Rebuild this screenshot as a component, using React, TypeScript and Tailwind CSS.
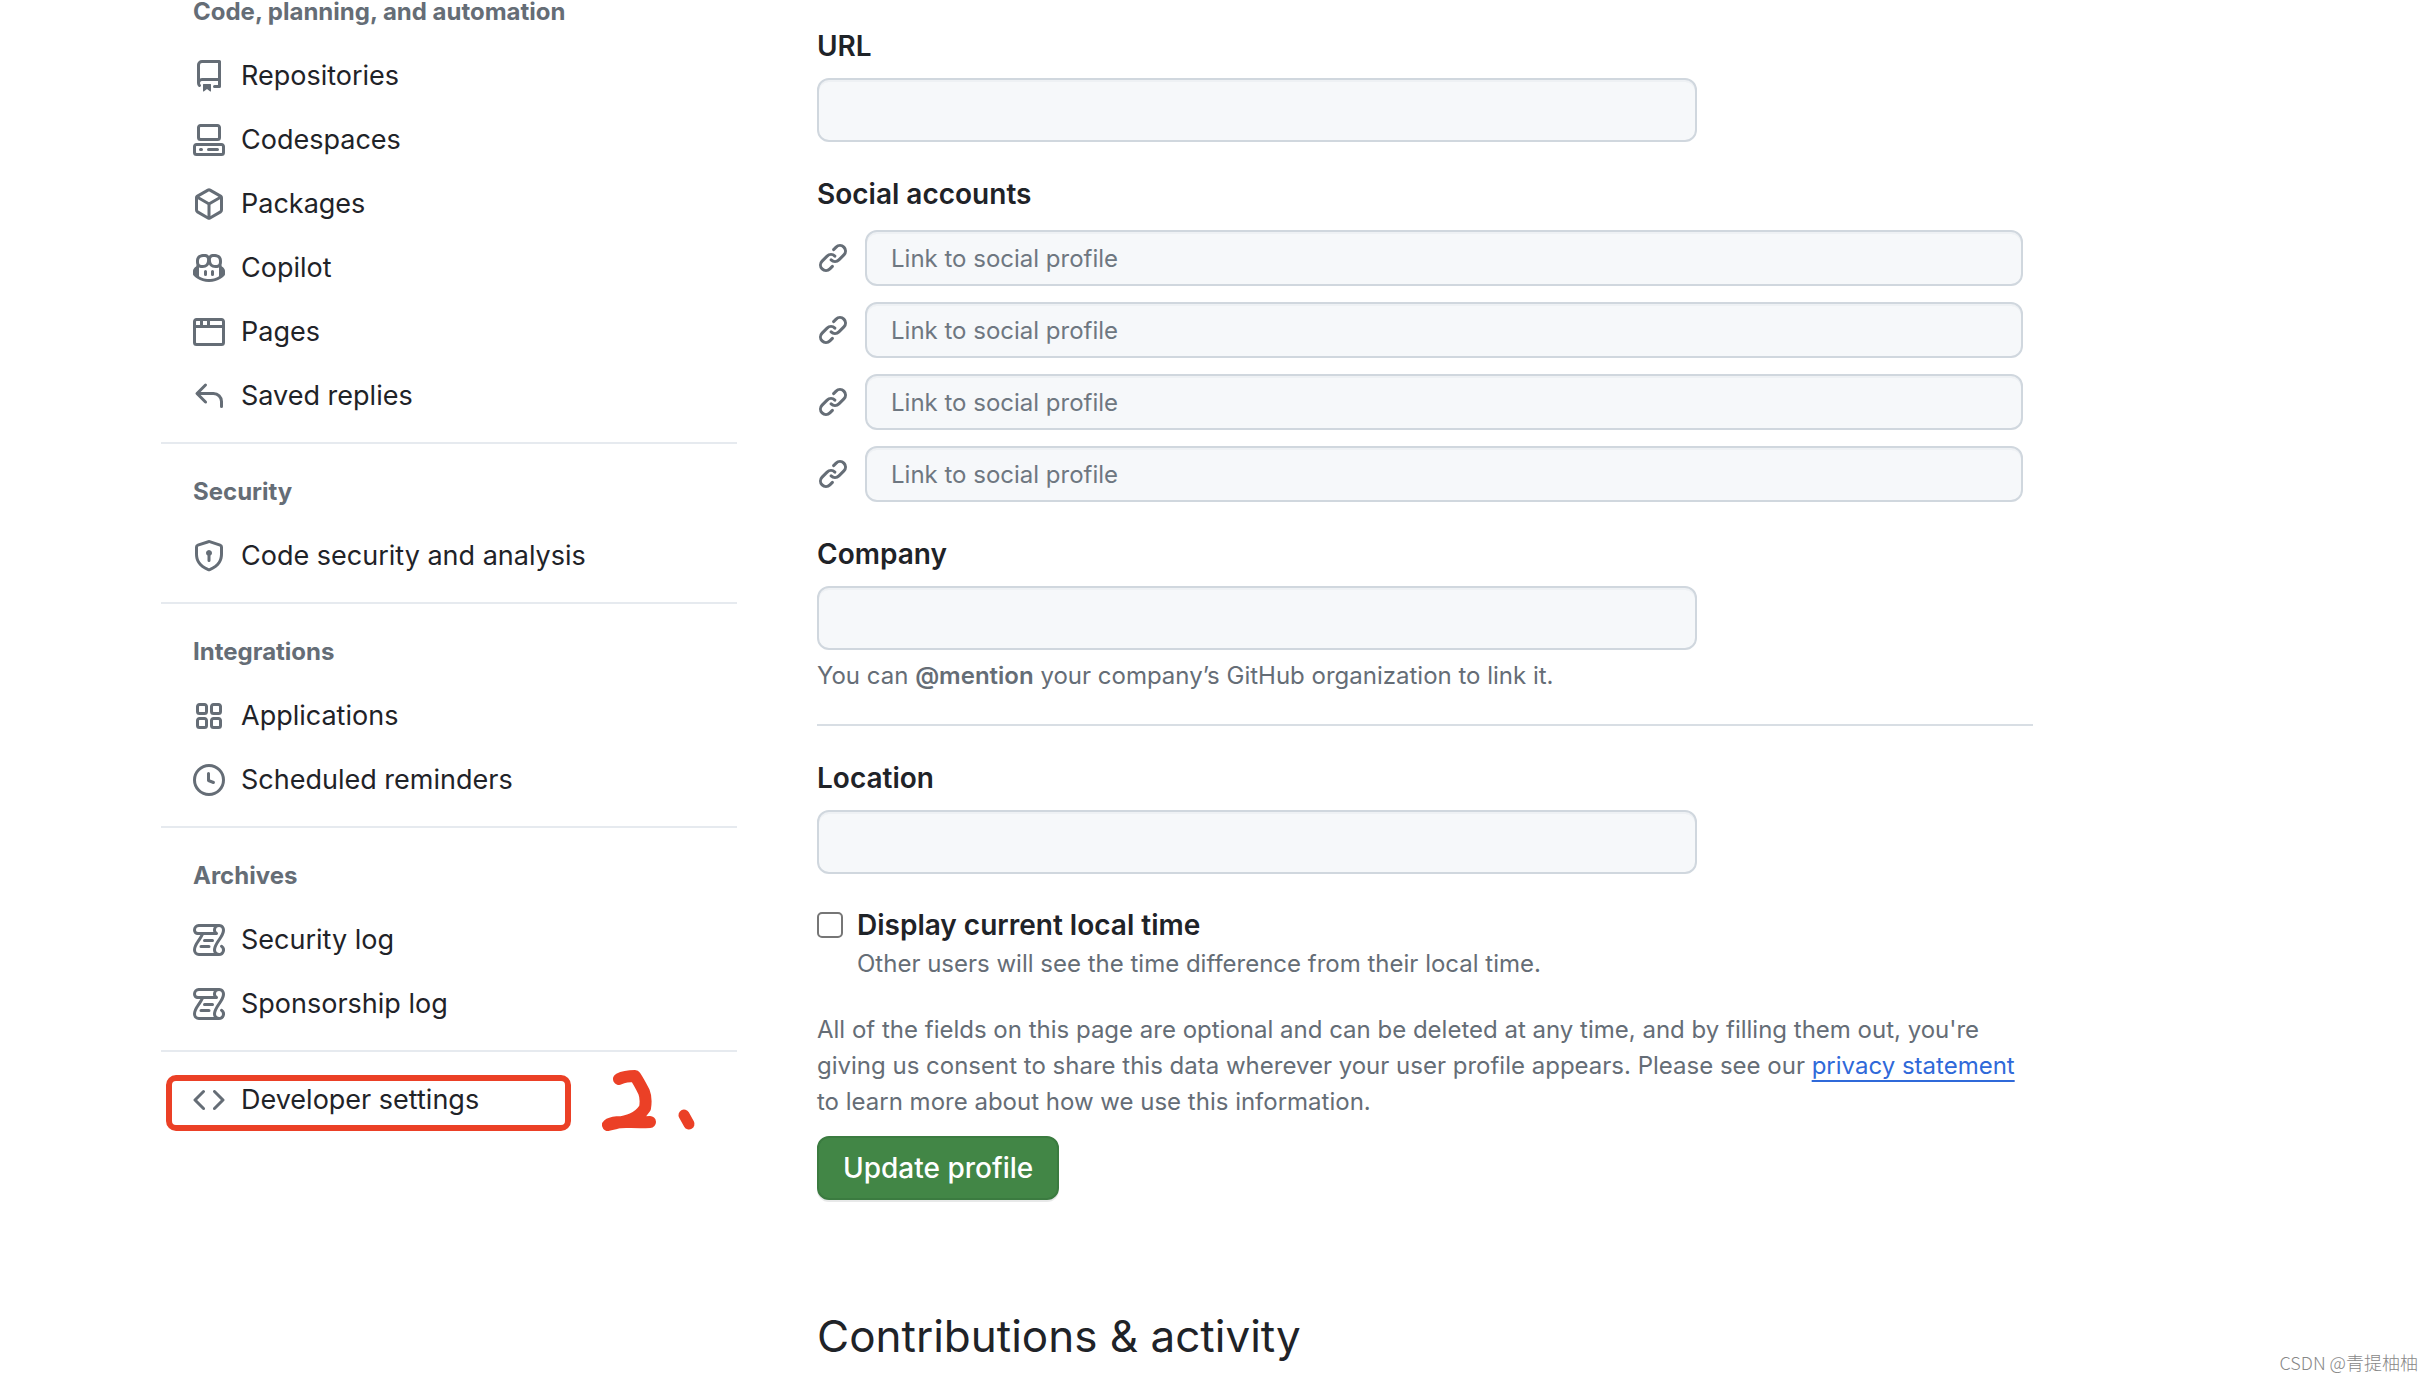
import { useId, useState } from 'react';
import type { ReactNode } from 'react';

type IconName =
    | 'repo'
    | 'codespaces'
    | 'package'
    | 'copilot'
    | 'browser'
    | 'reply'
    | 'shieldLock'
    | 'apps'
    | 'clock'
    | 'log'
    | 'code'
    | 'link';

type NavItem = {
    label: string;
    icon: IconName;
};

type NavSection = {
    title: string;
    items: NavItem[];
};

const iconPaths: Record<IconName, string> = {
    repo: 'M2 2.5A2.5 2.5 0 0 1 4.5 0h8.75a.75.75 0 0 1 .75.75v12.5a.75.75 0 0 1-.75.75h-2.5a.75.75 0 0 1 0-1.5h1.75v-2h-8a1 1 0 0 0-.714 1.7.75.75 0 1 1-1.072 1.05A2.495 2.495 0 0 1 2 11.5Zm10.5-1h-8a1 1 0 0 0-1 1v6.708A2.486 2.486 0 0 1 4.5 9h8ZM5 12.25a.25.25 0 0 1 .25-.25h3.5a.25.25 0 0 1 .25.25v3.25a.25.25 0 0 1-.4.2l-1.45-1.087a.249.249 0 0 0-.3 0L5.4 15.7a.25.25 0 0 1-.4-.2Z',
    codespaces:
        'M0 11.25c0-.966.784-1.75 1.75-1.75h12.5c.966 0 1.75.784 1.75 1.75v3A1.75 1.75 0 0 1 14.25 16H1.75A1.75 1.75 0 0 1 0 14.25Zm2-9.5C2 .784 2.784 0 3.75 0h8.5C13.216 0 14 .784 14 1.75v5a1.75 1.75 0 0 1-1.75 1.75h-8.5A1.75 1.75 0 0 1 2 6.75Zm1.75-.25a.25.25 0 0 0-.25.25v5c0 .138.112.25.25.25h8.5a.25.25 0 0 0 .25-.25v-5a.25.25 0 0 0-.25-.25Zm-2 9.5a.25.25 0 0 0-.25.25v3c0 .138.112.25.25.25h12.5a.25.25 0 0 0 .25-.25v-3a.25.25 0 0 0-.25-.25ZM7 12.75a.75.75 0 0 1 .75-.75h4.5a.75.75 0 0 1 0 1.5h-4.5a.75.75 0 0 1-.75-.75Zm-4 0a.75.75 0 0 1 .75-.75h.5a.75.75 0 0 1 0 1.5h-.5a.75.75 0 0 1-.75-.75Z',
    package:
        'm8.878.392 5.25 3.045c.54.314.872.89.872 1.514v6.098a1.75 1.75 0 0 1-.872 1.514l-5.25 3.045a1.75 1.75 0 0 1-1.756 0l-5.25-3.045A1.75 1.75 0 0 1 1 11.049V4.951c0-.624.332-1.201.872-1.514L7.122.392a1.75 1.75 0 0 1 1.756 0ZM7.875 1.69l-4.63 2.685L8 7.133l4.755-2.758-4.63-2.685a.248.248 0 0 0-.25 0ZM2.5 5.677v5.372c0 .09.047.171.125.216l4.625 2.683V8.432Zm6.25 8.271 4.625-2.683a.25.25 0 0 0 .125-.216V5.677L8.75 8.432Z',
    copilot:
        'M7.998 15.035c-4.562 0-7.873-2.914-7.998-3.749V9.338c.085-.628.677-1.686 1.588-2.065.013-.07.024-.143.036-.218.029-.183.06-.384.126-.612-.201-.508-.254-1.084-.254-1.656 0-.87.128-1.769.693-2.484.579-.733 1.494-1.124 2.724-1.261 1.206-.134 2.262.034 2.944.765.05.053.096.108.139.165.044-.057.094-.112.143-.165.682-.731 1.738-.899 2.944-.765 1.23.137 2.145.528 2.724 1.261.566.715.693 1.614.693 2.484 0 .572-.053 1.148-.254 1.656.066.228.098.429.126.612.012.076.024.148.037.218.924.385 1.522 1.471 1.591 2.095v1.872c0 .766-3.351 3.795-8.002 3.795Zm0-1.485c2.28 0 4.584-1.11 5.002-1.433V7.862l-.023-.116c-.49.21-1.075.291-1.727.291-1.146 0-2.059-.327-2.71-.991A3.222 3.222 0 0 1 8 6.303a3.24 3.24 0 0 1-.544.743c-.65.664-1.563.991-2.71.991-.652 0-1.236-.081-1.727-.291l-.023.116v4.255c.419.323 2.722 1.433 5.002 1.433ZM6.762 2.83c-.193-.206-.637-.413-1.682-.297-1.019.113-1.479.404-1.713.7-.247.312-.369.789-.369 1.554 0 .793.129 1.171.308 1.371.162.181.519.379 1.442.379.853 0 1.339-.235 1.638-.54.315-.322.527-.827.617-1.553.117-.935-.037-1.395-.241-1.614Zm4.155-.297c-1.044-.116-1.488.091-1.681.297-.204.219-.359.679-.242 1.614.091.726.303 1.231.618 1.553.299.305.784.54 1.638.54.922 0 1.28-.198 1.442-.379.179-.2.308-.578.308-1.371 0-.765-.123-1.242-.37-1.554-.233-.296-.693-.587-1.713-.7ZM6.25 9.037a.75.75 0 0 1 .75.75v1.501a.75.75 0 0 1-1.5 0V9.787a.75.75 0 0 1 .75-.75Zm4.25.75v1.501a.75.75 0 0 1-1.5 0V9.787a.75.75 0 0 1 1.5 0Z',
    browser:
        'M0 2.75C0 1.784.784 1 1.75 1h12.5c.966 0 1.75.784 1.75 1.75v10.5A1.75 1.75 0 0 1 14.25 15H1.75A1.75 1.75 0 0 1 0 13.25ZM14.5 6h-13v7.25c0 .138.112.25.25.25h12.5a.25.25 0 0 0 .25-.25Zm-6-3.5v2h6V2.75a.25.25 0 0 0-.25-.25ZM5 2.5v2h2v-2Zm-3.25 0a.25.25 0 0 0-.25.25V4.5h2v-2Z',
    reply: 'M6.78 1.97a.75.75 0 0 1 0 1.06L3.81 6h6.44A4.75 4.75 0 0 1 15 10.75v2.5a.75.75 0 0 1-1.5 0v-2.5a3.25 3.25 0 0 0-3.25-3.25H3.81l2.97 2.97a.749.749 0 0 1-.326 1.275.749.749 0 0 1-.734-.215L1.47 7.28a.75.75 0 0 1 0-1.06l4.25-4.25a.75.75 0 0 1 1.06 0Z',
    shieldLock:
        'm8.533.133 5.25 1.68A1.75 1.75 0 0 1 15 3.48V7c0 1.566-.32 3.182-1.303 4.682-.983 1.498-2.585 2.813-5.032 3.855a1.697 1.697 0 0 1-1.33 0c-2.447-1.042-4.049-2.357-5.032-3.855C1.32 10.182 1 8.566 1 7V3.48a1.75 1.75 0 0 1 1.217-1.667l5.25-1.68a1.748 1.748 0 0 1 1.066 0Zm-.61 1.429.001.001-5.25 1.68a.251.251 0 0 0-.174.237V7c0 1.36.275 2.666 1.057 3.859.784 1.194 2.121 2.342 4.366 3.298a.196.196 0 0 0 .154 0c2.245-.957 3.582-2.103 4.366-3.297C13.225 9.666 13.5 8.358 13.5 7V3.48a.25.25 0 0 0-.174-.238l-5.25-1.68a.25.25 0 0 0-.153 0ZM9.5 6.5c0 .536-.286 1.032-.75 1.3v2.45a.75.75 0 0 1-1.5 0V7.8A1.5 1.5 0 1 1 9.5 6.5Z',
    apps: 'M1.5 3.25c0-.966.784-1.75 1.75-1.75h2.5c.966 0 1.75.784 1.75 1.75v2.5A1.75 1.75 0 0 1 5.75 7.5h-2.5A1.75 1.75 0 0 1 1.5 5.75Zm7 0c0-.966.784-1.75 1.75-1.75h2.5c.966 0 1.75.784 1.75 1.75v2.5a1.75 1.75 0 0 1-1.75 1.75h-2.5A1.75 1.75 0 0 1 8.5 5.75Zm-7 7c0-.966.784-1.75 1.75-1.75h2.5c.966 0 1.75.784 1.75 1.75v2.5a1.75 1.75 0 0 1-1.75 1.75h-2.5a1.75 1.75 0 0 1-1.75-1.75Zm7 0c0-.966.784-1.75 1.75-1.75h2.5c.966 0 1.75.784 1.75 1.75v2.5a1.75 1.75 0 0 1-1.75 1.75h-2.5a1.75 1.75 0 0 1-1.75-1.75ZM3.25 3a.25.25 0 0 0-.25.25v2.5c0 .138.112.25.25.25h2.5A.25.25 0 0 0 6 5.75v-2.5A.25.25 0 0 0 5.75 3Zm7 0a.25.25 0 0 0-.25.25v2.5c0 .138.112.25.25.25h2.5a.25.25 0 0 0 .25-.25v-2.5a.25.25 0 0 0-.25-.25Zm-7 7a.25.25 0 0 0-.25.25v2.5c0 .138.112.25.25.25h2.5a.25.25 0 0 0 .25-.25v-2.5a.25.25 0 0 0-.25-.25Zm7 0a.25.25 0 0 0-.25.25v2.5c0 .138.112.25.25.25h2.5a.25.25 0 0 0 .25-.25v-2.5a.25.25 0 0 0-.25-.25Z',
    clock: 'M8 0a8 8 0 1 1 0 16A8 8 0 0 1 8 0ZM1.5 8a6.5 6.5 0 1 0 13 0 6.5 6.5 0 0 0-13 0Zm7-3.25v2.992l2.028.812a.75.75 0 0 1-.557 1.392l-2.5-1A.751.751 0 0 1 7 8.25v-3.5a.75.75 0 0 1 1.5 0Z',
    log: 'M5 8.25a.75.75 0 0 1 .75-.75h4a.75.75 0 0 1 0 1.5h-4A.75.75 0 0 1 5 8.25ZM4 10.5A.75.75 0 0 0 4 12h4a.75.75 0 0 0 0-1.5H4ZM13-.005c1.654 0 3 1.328 3 3 0 .982-.338 1.933-.783 2.818-.443.879-1.028 1.758-1.582 2.588l-.011.017c-.568.853-1.104 1.659-1.501 2.446-.398.789-.623 1.494-.623 2.136a1.5 1.5 0 1 0 2.333-1.248.75.75 0 0 1 .834-1.246A3 3 0 0 1 13 16H3a3 3 0 0 1-3-3c0-1.582.891-3.135 1.777-4.506.209-.322.418-.637.623-.946.473-.709.923-1.386 1.287-2.048H2.51c-.576 0-1.381-.133-1.907-.783A2.68 2.68 0 0 1 0 2.995a3 3 0 0 1 3-3Zm0 1.5a1.5 1.5 0 0 0-1.5 1.5c0 .476.223.834.667 1.132A.75.75 0 0 1 11.75 5.495H5.368c-.467 1.003-1.141 2.015-1.773 2.963-.192.289-.381.571-.558.845C2.13 10.711 1.5 11.916 1.5 13A1.5 1.5 0 0 0 3 14.5h7.401A2.989 2.989 0 0 1 10 13c0-.979.338-1.928.784-2.812.441-.874 1.023-1.748 1.575-2.576l.017-.026c.568-.853 1.103-1.658 1.501-2.448.398-.79.623-1.497.623-2.143 0-.838-.669-1.5-1.5-1.5Zm-10 0a1.5 1.5 0 0 0-1.5 1.5c0 .321.1.569.27.778.097.12.325.227.74.227h7.674A2.737 2.737 0 0 1 10 2.995c0-.546.146-1.059.401-1.5Z',
    code: 'm11.28 3.22 4.25 4.25a.75.75 0 0 1 0 1.06l-4.25 4.25a.749.749 0 0 1-1.275-.326.749.749 0 0 1 .215-.734L13.94 8l-3.72-3.72a.749.749 0 0 1 .326-1.275.749.749 0 0 1 .734.215Zm-6.56 0a.751.751 0 0 1 1.042.018.751.751 0 0 1 .018 1.042L2.06 8l3.72 3.72a.749.749 0 0 1-.326 1.275.749.749 0 0 1-.734-.215L.47 8.53a.75.75 0 0 1 0-1.06Z',
    link: 'm7.775 3.275 1.25-1.25a3.5 3.5 0 1 1 4.95 4.95l-2.5 2.5a3.5 3.5 0 0 1-4.95 0 .751.751 0 0 1 .018-1.042.751.751 0 0 1 1.042-.018 1.998 1.998 0 0 0 2.83 0l2.5-2.5a2.002 2.002 0 0 0-2.83-2.83l-1.25 1.25a.751.751 0 0 1-1.042-.018.751.751 0 0 1-.018-1.042Zm-4.69 9.64a1.998 1.998 0 0 0 2.83 0l1.25-1.25a.751.751 0 0 1 1.042.018.751.751 0 0 1 .018 1.042l-1.25 1.25a3.5 3.5 0 1 1-4.95-4.95l2.5-2.5a3.5 3.5 0 0 1 4.95 0 .751.751 0 0 1-.018 1.042.751.751 0 0 1-1.042.018 1.998 1.998 0 0 0-2.83 0l-2.5 2.5a1.998 1.998 0 0 0 0 2.83Z',
};

const sections: NavSection[] = [
    {
        title: 'Code, planning, and automation',
        items: [
            { label: 'Repositories', icon: 'repo' },
            { label: 'Codespaces', icon: 'codespaces' },
            { label: 'Packages', icon: 'package' },
            { label: 'Copilot', icon: 'copilot' },
            { label: 'Pages', icon: 'browser' },
            { label: 'Saved replies', icon: 'reply' },
        ],
    },
    {
        title: 'Security',
        items: [{ label: 'Code security and analysis', icon: 'shieldLock' }],
    },
    {
        title: 'Integrations',
        items: [
            { label: 'Applications', icon: 'apps' },
            { label: 'Scheduled reminders', icon: 'clock' },
        ],
    },
    {
        title: 'Archives',
        items: [
            { label: 'Security log', icon: 'log' },
            { label: 'Sponsorship log', icon: 'log' },
        ],
    },
];

const Icon = ({ name }: { name: IconName }) => (
    <svg viewBox="0 0 16 16" className="size-8 shrink-0 fill-[#656d76]" aria-hidden="true">
        <path d={iconPaths[name]} />
    </svg>
);

const NavLink = ({ label, icon }: NavItem) => (
    <a href="#" className="flex h-16 items-center gap-4 px-8 text-[27px]/[42px] text-[#1f2328]">
        <Icon name={icon} />
        {label}
    </a>
);

const Sidebar = () => (
    <nav aria-label="User settings" className="-mt-5 w-[576px] shrink-0">
        {sections.map((section) => (
            <section key={section.title} className="mb-4 border-b-2 border-[#e6eaef] pb-3.5">
                <h3 className="flex h-16 items-center px-8 text-2xl/6 font-bold text-[#656d76]">
                    {section.title}
                </h3>
                <ul>
                    {section.items.map((item) => (
                        <li key={item.label}>
                            <NavLink {...item} />
                        </li>
                    ))}
                </ul>
            </section>
        ))}

        <div className="relative">
            <NavLink label="Developer settings" icon="code" />
            {/* Red pen marks over the last entry */}
            <div className="pointer-events-none absolute top-[7px] left-[5px] h-14 w-[405px] rounded-[10px] border-6 border-[#eb4026]" />
            <svg
                viewBox="0 0 100 64"
                role="img"
                aria-label="Step 2"
                className="pointer-events-none absolute top-0 left-[439px] h-16 w-[100px] fill-none stroke-[#eb4026]"
                strokeLinecap="round"
                strokeLinejoin="round"
            >
                <path
                    d="M19 11C23 9 29 8 35 8C39 14 41 18 44 24C46 29 46 34 45 40C41 46 37 49 32 51C24 54 16 55 8 57C14 52 30 55 50 54"
                    strokeWidth="12"
                />
                <path d="M84 47L89 56" strokeWidth="11" />
            </svg>
        </div>
    </nav>
);

const inputClass =
    'rounded-xl border-2 border-[#d0d7de] bg-[#f6f8fa] px-6 text-2xl text-[#1f2328] shadow-[inset_0_2px_0_rgba(208,215,222,0.2)] outline-none placeholder:text-[#6e7781]';

const TextField = ({ label, children }: { label: string; children?: ReactNode }) => {
    const id = useId();

    return (
        <div className="mb-[30px]">
            <label htmlFor={id} className="mb-2.5 block text-[28px]/[44px] font-semibold">
                {label}
            </label>
            <input id={id} type="text" className={`block h-16 w-full max-w-[880px] ${inputClass}`} />
            {children}
        </div>
    );
};

const SocialAccounts = () => (
    <div role="group" aria-labelledby="social-accounts" className="mb-[30px]">
        <h4 id="social-accounts" className="mb-3.5 text-[28px]/[44px] font-semibold">
            Social accounts
        </h4>
        <ul className="flex flex-col gap-4 pr-2.5">
            {[1, 2, 3, 4].map((n) => (
                <li key={n} className="flex items-center gap-4">
                    <Icon name="link" />
                    <input
                        type="text"
                        aria-label={`Link to social profile ${n}`}
                        placeholder="Link to social profile"
                        className={`h-14 min-w-0 flex-1 ${inputClass}`}
                    />
                </li>
            ))}
        </ul>
    </div>
);

const ProfileForm = () => {
    const [showTime, setShowTime] = useState(false);

    return (
        <form className="max-w-[1216px]" onSubmit={(e) => e.preventDefault()}>
            <TextField label="URL" />
            <SocialAccounts />
            <TextField label="Company">
                <p className="mt-2 text-2xl/9 text-[#656d76]">
                    You can <strong className="font-semibold">@mention</strong> your company’s GitHub organization to
                    link it.
                </p>
            </TextField>

            <hr className="mb-[30px] border-t-2 border-[#d8dee4]" />

            <TextField label="Location" />

            <div className="mb-[30px]">
                <div className="flex items-center gap-3.5">
                    <input
                        id="local-time"
                        type="checkbox"
                        checked={showTime}
                        onChange={(e) => setShowTime(e.target.checked)}
                        aria-describedby="local-time-note"
                        className="size-[26px] appearance-none rounded-[5px] border-2 border-[#767676] bg-white checked:bg-[#0969da]"
                    />
                    <label htmlFor="local-time" className="text-[28px]/[42px] font-semibold">
                        Display current local time
                    </label>
                </div>
                <p id="local-time-note" className="pl-10 text-2xl/9 text-[#656d76]">
                    Other users will see the time difference from their local time.
                </p>
            </div>

            <p className="mb-4 text-2xl/9 text-[#656d76]">
                All of the fields on this page are optional and can be deleted at any time, and by filling them out,
                you're giving us consent to share this data wherever your user profile appears. Please see our{' '}
                <a href="#" className="text-[#2f69d9] underline decoration-2 underline-offset-6">
                    privacy statement
                </a>{' '}
                to learn more about how we use this information.
            </p>

            <button
                type="submit"
                className="h-16 rounded-xl border-2 border-[#3b7b40] bg-[#428646] px-6 text-[28px] font-medium text-white shadow-[0_2px_0_rgba(31,35,40,0.1)]"
            >
                Update profile
            </button>
        </form>
    );
};

export default function App() {
    return (
        <div className="relative min-h-screen overflow-hidden bg-white font-['Inter',sans-serif] text-[#1f2328]">
            <div className="flex gap-20 px-[161px]">
                <Sidebar />
                <main className="min-w-0 flex-1 pt-6">
                    <ProfileForm />
                    <h2 className="mt-[100px] text-[44px]/[72px] font-normal">Contributions &amp; activity</h2>
                </main>
            </div>

            <p className="absolute right-3.5 bottom-2 font-['Noto_Sans_CJK_SC',sans-serif] text-lg/6 font-light text-[#888]">
                CSDN @青提柚柚
            </p>
        </div>
    );
}
